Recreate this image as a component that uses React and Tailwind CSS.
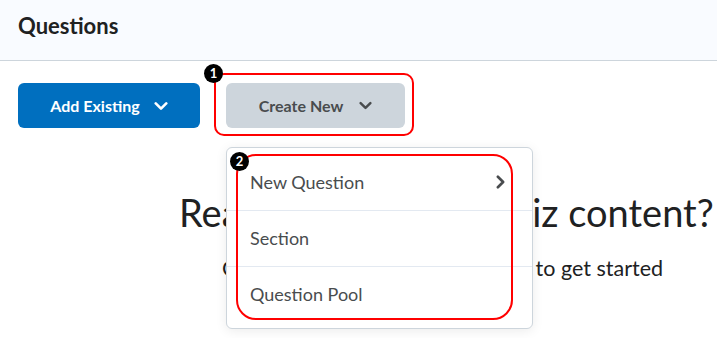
const Chevron = ({ className }) => (
  <svg viewBox="0 0 16 10" className={className} fill="none" stroke="currentColor" strokeWidth="3" strokeLinecap="round" strokeLinejoin="round">
    <path d="M2 2l6 6 6-6" />
  </svg>
);

const ChevronRight = ({ className }) => (
  <svg viewBox="0 0 10 16" className={className} fill="none" stroke="currentColor" strokeWidth="3" strokeLinecap="round" strokeLinejoin="round">
    <path d="M2 2l6 6-6 6" />
  </svg>
);

const Badge = ({ n, className }) => (
  <div className={`absolute w-[19px] h-[19px] rounded-full bg-black text-white text-[13px] font-bold flex items-center justify-center leading-none ${className}`}>
    {n}
  </div>
);

const ITEMS = [
  { label: 'New Question', sub: true },
  { label: 'Section' },
  { label: 'Question Pool' },
];

export default function App() {
  return (
    <div className="relative w-[717px] h-[338px] overflow-hidden bg-white font-['Lato','Noto_Sans',sans-serif]">
      <div className="h-[61px] bg-[#f9fbff] border-b border-[#cdd5dc] px-[18px] flex items-center">
        <h1 className="text-[22px] font-bold text-[#202122] -mt-[10px]">Questions</h1>
      </div>

      <div className="flex gap-[26px] px-[18px] mt-[22px]">
        <button className="w-[182px] h-[45px] rounded-[6px] bg-[#006fbf] text-white text-[16px] font-bold flex items-center justify-center gap-[14px]">
          Add Existing
          <Chevron className="w-[14px] h-[10px]" />
        </button>
        <button className="w-[179px] h-[45px] rounded-[6px] bg-[#cdd5dc] text-[#494c4e] text-[16px] font-bold flex items-center justify-center gap-[16px]">
          Create New
          <Chevron className="w-[13px] h-[9px]" />
        </button>
      </div>

      <p className="ml-[179px] mt-[64px] whitespace-nowrap text-[38px] text-[#202122] leading-[40px]">Ready to add your quiz content?</p>
      <p className="ml-[222px] mt-[23px] whitespace-nowrap text-[21.5px] text-[#202122] leading-[26px]">Create new or add existing items to get started</p>

      {/* dropdown */}
      <div className="absolute left-[226px] top-[147px] w-[307px] py-[6px] bg-white border border-[#cdd5dc] rounded-[6px] shadow-[0_2px_12px_rgba(0,0,0,0.08)]">
        {ITEMS.map((it, i) => (
          <div key={it.label} className={`h-[56px] pl-[23px] pr-[27px] flex items-center justify-between text-[18px] text-[#494c4e] ${i > 0 ? 'border-t border-[#e3e9f1]' : ''}`}>
            {it.label}
            {it.sub && <ChevronRight className="w-[9px] h-[14px]" />}
          </div>
        ))}
      </div>

      {/* annotations */}
      <div className="absolute left-[214px] top-[73px] w-[200px] h-[63px] border-2 border-[#ff0000] rounded-[10px]" />
      <Badge n="1" className="left-[204px] top-[64px]" />
      <div className="absolute left-[236px] top-[154px] w-[277px] h-[166px] border-2 border-[#ff0000] rounded-[20px]" />
      <Badge n="2" className="left-[230px] top-[152px]" />
    </div>
  );
}
